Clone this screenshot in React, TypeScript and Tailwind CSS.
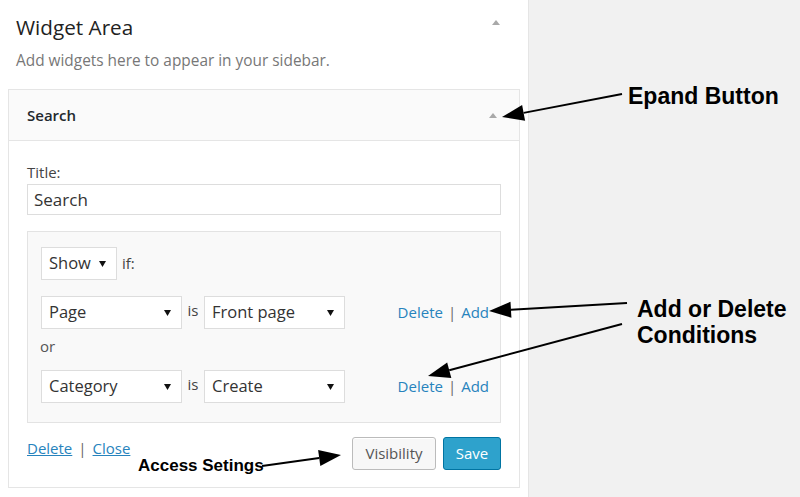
import React from 'react';

const ui = { fontFamily: '"Open Sans", "Liberation Sans", sans-serif' };
const note = { fontFamily: '"Liberation Sans", Arial, sans-serif' };

const Caret = () => (
  <svg width="8" height="5" viewBox="0 0 8 5" className="shrink-0">
    <path d="M0 5 L4 0 L8 5 Z" fill="#a9a9a9" />
  </svg>
);

const Select: React.FC<{ label: string; width: string }> = ({ label, width }) => (
  <div
    className={`${width} h-[33px] flex items-center justify-between pl-[7px] pr-[10px] bg-white border border-[#dddddd] text-[16.5px] text-[#333]`}
  >
    <span>{label}</span>
    <svg width="7" height="6" viewBox="0 0 7 6">
      <path d="M0 0 L7 0 L3.5 6 Z" fill="#111" />
    </svg>
  </div>
);

const RowLinks = () => (
  <div className="ml-auto -mr-[2px] text-[15px] text-[#2783bd] flex items-center gap-[5px]">
    <span>Delete</span>
    <span className="text-[#666]">|</span>
    <span>Add</span>
  </div>
);

const Arrow: React.FC<{ x1: number; y1: number; x2: number; y2: number }> = ({ x1, y1, x2, y2 }) => {
  const a = Math.atan2(y2 - y1, x2 - x1);
  const len = 22;
  const half = 8;
  const bx = x2 - Math.cos(a) * len;
  const by = y2 - Math.sin(a) * len;
  const px = -Math.sin(a) * half;
  const py = Math.cos(a) * half;
  return (
    <g>
      <line x1={x1} y1={y1} x2={bx} y2={by} stroke="#000" strokeWidth="2" />
      <polygon points={`${x2},${y2} ${bx + px},${by + py} ${bx - px},${by - py}`} fill="#000" />
    </g>
  );
};

export default function App() {
  return (
    <div className="relative w-[800px] h-[497px] flex overflow-hidden bg-[#f1f1f1]" style={ui}>
      {/* widget area column */}
      <div className="w-[529px] h-full bg-white border-r border-[#e5e5e5] flex flex-col">
        <div className="flex items-center justify-between pl-4 pr-[28px] pt-[13px]">
          <h2 className="text-[20.7px] leading-[28px] text-[#222]">Widget Area</h2>
          <div className="-mt-[10px]">
            <Caret />
          </div>
        </div>
        <p className="pl-4 mt-[10px] text-[15.4px] leading-[20px] text-[#777]">
          Add widgets here to appear in your sidebar.
        </p>

        <div className="mx-2 mt-[18px] w-[512px] border border-[#e5e5e5] bg-white">
          <div className="h-[51px] flex items-center justify-between pl-[18px] pr-[22px] bg-[#fafafa] border-b border-[#e5e5e5]">
            <span className="text-[15px] font-semibold text-[#23282d]">Search</span>
            <Caret />
          </div>

          <div className="px-[18px] pt-[21px] pb-[17px]">
            <div className="text-[15px] leading-[21px] text-[#444]">Title:</div>
            <div className="mt-[1px] h-[31px] flex items-center px-[6px] border border-[#dddddd] text-[17px] text-[#333]">
              Search
            </div>

            <div className="mt-[16px] bg-[#f9f9f9] border border-[#e3e3e3] px-[13px] pt-[15px] pb-[19px]">
              <div className="flex items-center gap-[5px] h-[33px]">
                <Select label="Show" width="w-[76px]" />
                <span className="text-[15px] text-[#444]">if:</span>
              </div>

              <div className="mt-[16px] flex items-center">
                <Select label="Page" width="w-[141px]" />
                <span className="w-[22px] text-center text-[15px] text-[#444] -mt-[4px]">is</span>
                <Select label="Front page" width="w-[141px]" />
                <RowLinks />
              </div>

              <div className="-ml-[1px] mt-[6px] text-[15px] leading-[22px] text-[#555]">or</div>

              <div className="mt-[13px] flex items-center">
                <Select label="Category" width="w-[141px]" />
                <span className="w-[22px] text-center text-[15px] text-[#444] -mt-[4px]">is</span>
                <Select label="Create" width="w-[141px]" />
                <RowLinks />
              </div>
            </div>

            <div className="mt-[13px] flex items-start justify-between">
              <div className="mt-[1px] text-[15px] flex items-center gap-[6px]">
                <span className="text-[#2783bd] underline">Delete</span>
                <span className="text-[#666]">|</span>
                <span className="text-[#2783bd] underline">Close</span>
              </div>
              <div className="mt-[1px] flex gap-[7px]">
                <button className="w-[84px] h-[33px] rounded-[3px] bg-[#f7f7f7] border border-[#bbbbbb] text-[15px] text-[#555] shadow-[inset_0_1px_0_#fff]">
                  Visibility
                </button>
                <button className="w-[58px] h-[33px] rounded-[3px] bg-[#2ea2cc] border border-[#0074a2] text-[15px] text-white">
                  Save
                </button>
              </div>
            </div>
          </div>
        </div>
      </div>

      {/* annotations */}
      <div className="absolute left-[628px] top-[83px] text-[23px] font-bold leading-[26px] text-black" style={note}>
        Epand Button
      </div>
      <div className="absolute left-[637px] top-[296px] text-[23px] font-bold leading-[26px] text-black" style={note}>
        Add or Delete
        <br />
        Conditions
      </div>
      <div className="absolute left-[138px] top-[456px] text-[17px] font-bold leading-[20px] text-black" style={note}>
        Access Setings
      </div>

      <svg className="absolute inset-0 pointer-events-none" width="800" height="497">
        <Arrow x1={622} y1={94} x2={502} y2={117} />
        <Arrow x1={627} y1={303} x2={489} y2={311} />
        <Arrow x1={622} y1={324} x2={428} y2={376} />
        <Arrow x1={262} y1={466} x2={341} y2={455} />
      </svg>
    </div>
  );
}
